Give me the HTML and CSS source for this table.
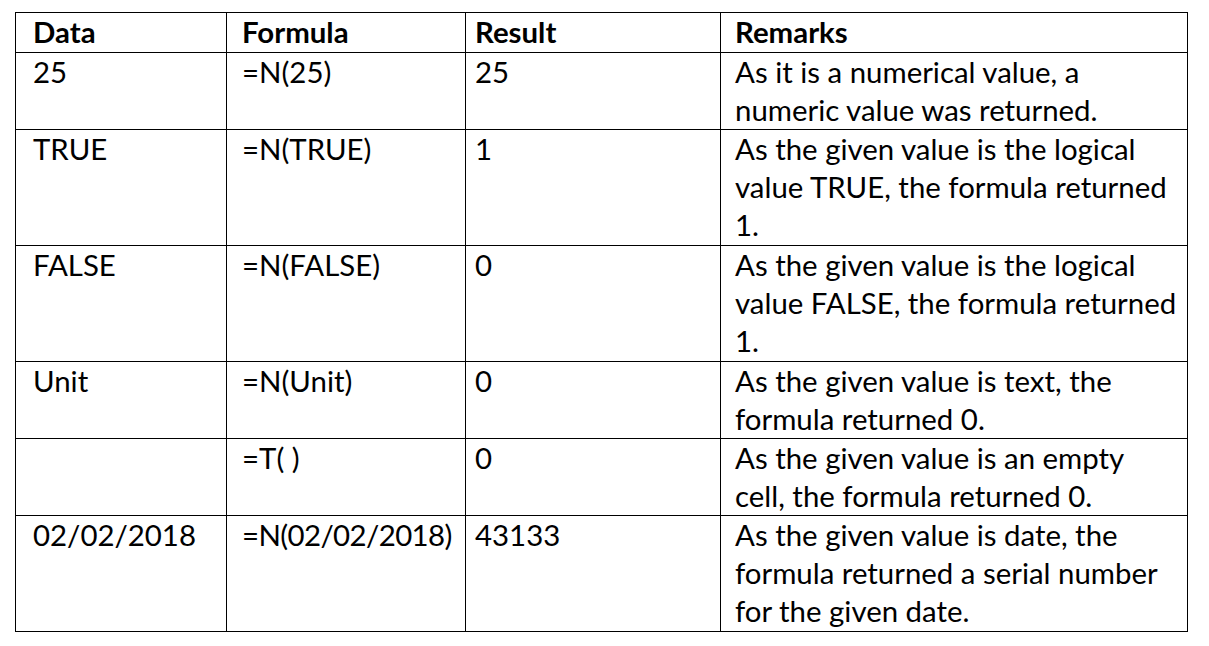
FILE: index.html
```html
<!DOCTYPE html>
<html>
<head>
<meta charset="utf-8">
<link rel="stylesheet" href="styles.css">
</head>
<body>
<table class="tbl">
  <colgroup>
    <col class="c1"><col class="c2"><col class="c3"><col class="c4">
  </colgroup>
  <thead>
    <tr class="head">
      <th class="d">Data</th><th class="f">Formula</th><th class="r">Result</th><th class="m">Remarks</th>
    </tr>
  </thead>
  <tbody>
    <tr class="two first">
      <td class="d">25</td><td class="f">=N(25)</td><td class="r">25</td>
      <td class="m">As it is a numerical value, a<br>numeric value was returned.</td>
    </tr>
    <tr class="three">
      <td class="d">TRUE</td><td class="f">=N(TRUE)</td><td class="r">1</td>
      <td class="m">As the given value is the logical<br>value TRUE, the formula returned<br>1.</td>
    </tr>
    <tr class="three">
      <td class="d">FALSE</td><td class="f">=N(FALSE)</td><td class="r">0</td>
      <td class="m">As the given value is the logical<br>value FALSE, the formula returned<br>1.</td>
    </tr>
    <tr class="two">
      <td class="d">Unit</td><td class="f">=N(Unit)</td><td class="r">0</td>
      <td class="m">As the given value is text, the<br>formula returned 0.</td>
    </tr>
    <tr class="two">
      <td class="d"></td><td class="f">=T( )</td><td class="r">0</td>
      <td class="m">As the given value is an empty<br>cell, the formula returned 0.</td>
    </tr>
    <tr class="three">
      <td class="d">02/02/2018</td><td class="f narrow">=N(02/02/2018)</td><td class="r">43133</td>
      <td class="m">As the given value is date, the<br>formula returned a serial number<br>for the given date.</td>
    </tr>
  </tbody>
</table>
</body>
</html>
```
FILE: styles.css
```css
html, body {
  margin: 0;
  padding: 0;
  background: #ffffff;
}
body {
  padding: 12px 0 0 15px;
  font-family: Lato, "Open Sans", sans-serif;
  color: #000;
}
.tbl {
  border-collapse: collapse;
  table-layout: fixed;
  width: 1172px;
}
.c1 { width: 211px; }
.c2 { width: 239px; }
.c3 { width: 255px; }
.c4 { width: 467px; }
.tbl th, .tbl td {
  border: 1px solid #000;
  vertical-align: top;
  text-align: left;
  font-size: 29.4px;
  line-height: 38px;
  padding: 0 0 0 15px;
  white-space: nowrap;
}
.tbl th {
  font-weight: bold;
  padding-top: 0;
}
.tbl .r { padding-left: 9px; }
.tbl .m { padding-left: 14px; }
.tbl .d { padding-left: 17px; }
.tbl .narrow { letter-spacing: -0.6px; }
.head { height: 40px; }
.two { height: 77px; }
.two.first { height: 76px; }
.three { height: 116px; }
```
